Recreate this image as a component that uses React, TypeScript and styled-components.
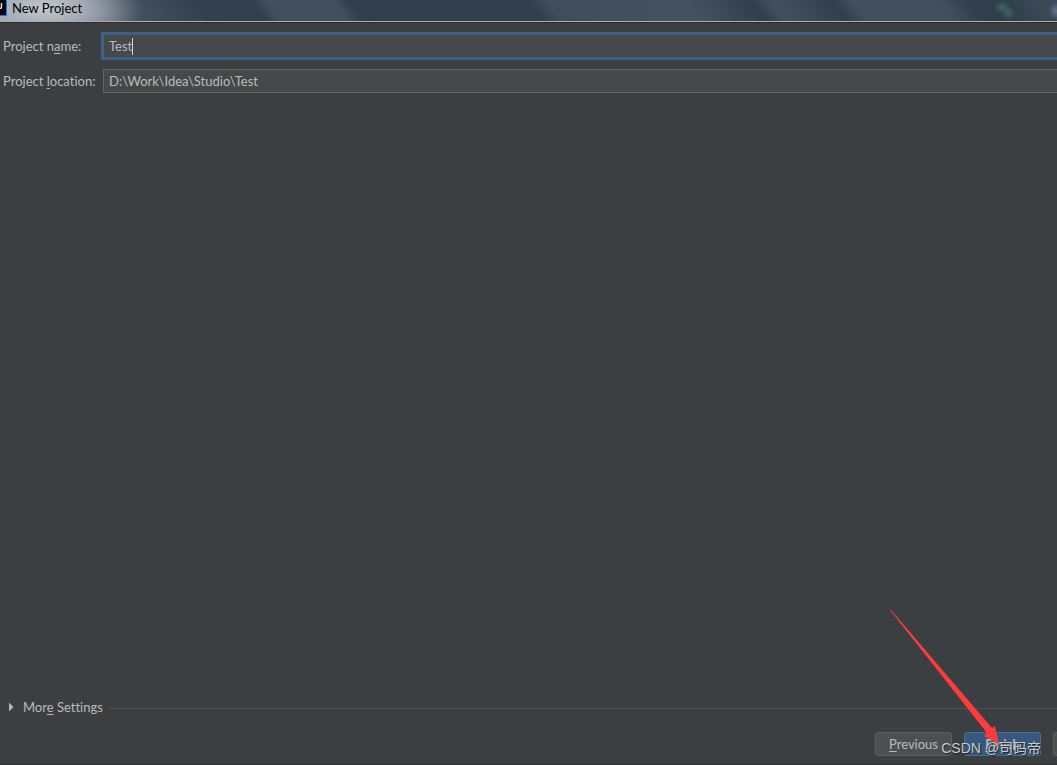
import React from "react";
import styled, { createGlobalStyle } from "styled-components";

const GlobalStyle = createGlobalStyle`
  * { box-sizing: border-box; }
  body { margin: 0; background: #3c3f41; }
  u { text-underline-offset: 2px; text-decoration-thickness: 1px; text-decoration-skip-ink: none; }
`;

const Dialog = styled.div`
  position: relative;
  display: flex;
  flex-direction: column;
  min-height: 100vh;
  overflow: hidden;
  background: #3c3f41;
  border-bottom: 1px solid #2f2f33;
  color: #bbbbbb;
  font-family: Lato, "Noto Sans", "Noto Sans CJK SC", sans-serif;
  font-size: 13px;
  font-variant-ligatures: none;
  line-height: 18px;
`;

const TitleBar = styled.header`
  display: flex;
  align-items: flex-start;
  gap: 5px;
  height: 23px;
  border-bottom: 1px solid #2b2d30;
  box-shadow: inset 0 -1px 0 #a9adb2;
  background:
    radial-gradient(ellipse 100px 40px at 44px 8px, #c4c9d0 0%, #b3b9c1cc 40%, #8a929c00 100%),
    radial-gradient(ellipse 9px 7px at 1002px 7px, #3f6e66cc 0%, #3f6e6600 100%),
    radial-gradient(ellipse 8px 7px at 1008px 13px, #3f6e66cc 0%, #3f6e6600 100%),
    radial-gradient(ellipse 8px 9px at 1056px 11px, #65718a 0%, #65718a00 100%),
    linear-gradient(54deg,
      #7f8994 0px, #66717d 80px, #43505d 112px, #3b4855 145px, #33404d 170px, #323f4c 216px,
      #434f5c 228px, #42505d 282px, #313e4b 294px, #323f4c 440px,
      #404d5a 456px, #44515e 540px, #44515e 570px, #313e4b 620px,
      #424f5c 636px, #3c4956 660px, #313e4b 686px, #424f5c 702px,
      #434f5c 772px, #313e4b 796px, #313e4b 822px, #394756 845px, #3b4858 862px);
`;

const AppIcon = styled.svg`
  display: block;
  flex: none;
  width: 7px;
  height: 16px;
`;

const Title = styled.h1`
  margin: 0;
  color: #000;
  font-size: 13px;
  font-weight: 400;
  line-height: 16px;
`;

const Form = styled.form`
  display: flex;
  flex: 1;
  flex-direction: column;
  padding-top: 9px;
`;

const FieldRow = styled.div`
  display: grid;
  grid-template-columns: 98px 1fr;
  align-items: center;
  margin-bottom: 9px;
  padding-left: 3px;
  white-space: nowrap;
`;

const Field = styled.div<{ $active?: boolean }>`
  display: flex;
  align-items: center;
  height: ${(p) => (p.$active ? 28 : 24)}px;
  margin-left: ${(p) => (p.$active ? 0 : 2)}px;
  padding-left: 5px;
  background: #45494a;
  border: solid ${(p) => (p.$active ? "#3d6185" : "#646464")};
  border-width: ${(p) => (p.$active ? "3px 0 3px 3px" : "1px 0 1px 1px")};
`;

const TextInput = styled.input`
  field-sizing: content;
  height: 18px;
  padding: 0;
  border: 0;
  outline: 0;
  background: transparent;
  color: #bbbbbb;
  caret-color: transparent;
  font: inherit;
`;

const Caret = styled.span`
  width: 1px;
  height: 17px;
  background: #d0d0d0;
`;

const MoreSettings = styled.div`
  display: flex;
  align-items: center;
  gap: 6px;
  margin-top: auto;
  padding-left: 8px;
`;

const Disclosure = styled.button`
  display: flex;
  align-items: center;
  gap: 9px;
  padding: 0;
  border: 0;
  background: none;
  color: inherit;
  font: inherit;
`;

const Rule = styled.hr`
  flex: 1;
  margin: 2px 0 0;
  border: 0;
  border-top: 1px solid #515151;
`;

const Footer = styled.footer`
  display: flex;
  justify-content: flex-end;
  gap: 12px;
  margin: 16px -73px 0 0;
  padding-bottom: 8px;
`;

const Button = styled.button<{ $primary?: boolean }>`
  flex: none;
  width: 77px;
  height: 24px;
  padding: 0;
  border: 1px solid ${(p) => (p.$primary ? "#4c708c" : "#5e6060")};
  border-radius: 3px;
  background: ${(p) => (p.$primary ? "#365880" : "#4c5052")};
  color: #bbbbbb;
  font: inherit;
  font-weight: ${(p) => (p.$primary ? 700 : 400)};
`;

const Arrow = styled.svg`
  position: absolute;
  right: 56px;
  bottom: 18px;
  width: 112px;
  height: 138px;
  pointer-events: none;
`;

const Watermark = styled.span`
  position: absolute;
  right: 16px;
  bottom: 6px;
  color: #c9cbcd;
  font-family: "Liberation Sans", "Noto Sans CJK SC", sans-serif;
  font-size: 14px;
  line-height: 20px;
  text-shadow: 1px 1px 1px #222;
  white-space: nowrap;
  pointer-events: none;
`;

export default function App() {
  return (
    <Dialog>
      <GlobalStyle />
      <TitleBar>
        <AppIcon viewBox="0 0 7 16" aria-hidden="true">
          <rect width="7" height="16" fill="#087cfa" />
          <rect width="6" height="15" fill="#000" />
          <path d="M1.5 3v4q0 1.5-1.5 1.5" fill="none" stroke="#ddd" strokeWidth="1.5" />
        </AppIcon>
        <Title>New Project</Title>
      </TitleBar>
      <Form onSubmit={(e) => e.preventDefault()}>
        <FieldRow>
          <label htmlFor="name">Project n<u>a</u>me:</label>
          <Field $active>
            <TextInput id="name" defaultValue="Test" />
            <Caret />
          </Field>
        </FieldRow>
        <FieldRow>
          <label htmlFor="location">Project <u>l</u>ocation:</label>
          <Field>
            <TextInput id="location" defaultValue="D:\Work\Idea\Studio\Test" />
          </Field>
        </FieldRow>
        <MoreSettings>
          <Disclosure type="button" aria-expanded="false">
            <svg width="6" height="10" viewBox="0 0 6 10" aria-hidden="true">
              <path d="M1 0.5L5.5 5L1 9.5Z" fill="#b4b7b9" />
            </svg>
            <span>Mor<u>e</u> Settings</span>
          </Disclosure>
          <Rule />
        </MoreSettings>
        <Footer>
          <Button type="button"><u>P</u>revious</Button>
          <Button type="submit" $primary><u>F</u>inish</Button>
          <Button type="button" aria-label="Cancel" />
        </Footer>
      </Form>
      <Arrow viewBox="0 0 112 138" aria-hidden="true">
        <path d="M1 1L2 2L103 120L106 118L110 136L95 128L98 125L1 2Z" fill="#ff3b3b" />
      </Arrow>
      <Watermark>CSDN @司码帝</Watermark>
    </Dialog>
  );
}
